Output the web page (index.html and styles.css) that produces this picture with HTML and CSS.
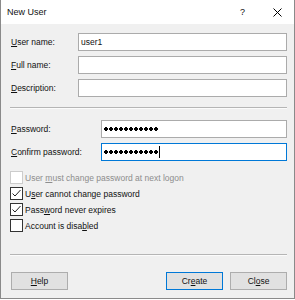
FILE: index.html
```html
<!DOCTYPE html>
<html>
<head>
<meta charset="utf-8">
<link rel="stylesheet" href="styles.css">
</head>
<body>
<div class="window">
  <div class="titlebar">
    <span class="title">New User</span>
    <span class="tb-help">?</span>
    <span class="tb-close">
      <svg width="9" height="9" viewBox="0 0 9 9"><path d="M0.5 0.5L8.5 8.5M8.5 0.5L0.5 8.5" stroke="#000" stroke-width="1" fill="none"/></svg>
    </span>
  </div>
  <div class="content">
    <div class="rows rows-top">
      <div class="row"><label class="lbl"><u>U</u>ser name:</label><div class="field">user1</div></div>
      <div class="row"><label class="lbl"><u>F</u>ull name:</label><div class="field"></div></div>
      <div class="row"><label class="lbl"><u>D</u>escription:</label><div class="field"></div></div>
    </div>
    <div class="sep sep1"></div>
    <div class="rows rows-pw">
      <div class="row"><label class="lbl"><u>P</u>assword:</label><div class="field pw"><span class="dots" aria-label="11 characters"></span></div></div>
      <div class="row"><label class="lbl"><u>C</u>onfirm password:</label><div class="field pw focus"><span class="dots" aria-label="11 characters"></span><span class="caret"></span></div></div>
    </div>
    <div class="checks">
      <div class="chk disabled"><span class="box"></span><span>User <u>m</u>ust change password at next logon</span></div>
      <div class="chk"><span class="box"><svg width="11" height="11" viewBox="0 0 11 11"><path d="M1.5 5.5L4 8L9.5 2" stroke="#222" stroke-width="1" fill="none"/></svg></span><span>U<u>s</u>er cannot change password</span></div>
      <div class="chk"><span class="box"><svg width="11" height="11" viewBox="0 0 11 11"><path d="M1.5 5.5L4 8L9.5 2" stroke="#222" stroke-width="1" fill="none"/></svg></span><span>Pass<u>w</u>ord never expires</span></div>
      <div class="chk"><span class="box"></span><span>Account is disa<u>b</u>led</span></div>
    </div>
    <div class="spacer"></div>
    <div class="sep sep2"></div>
    <div class="buttons">
      <div class="btn"><u>H</u>elp</div>
      <div class="grow"></div>
      <div class="btn default">Cr<u>e</u>ate</div>
      <div class="btn">Cl<u>o</u>se</div>
    </div>
  </div>
</div>
</body>
</html>
```
FILE: styles.css
```css
html, body {
  margin: 0;
  padding: 0;
  background: #ffffff;
}
body {
  font-family: "Liberation Sans", Arial, sans-serif;
  font-size: 8.5px;
  color: #111;
}
.window {
  width: 295px;
  height: 299px;
  box-sizing: border-box;
  border: 1px solid #8a8a8a;
  border-top: none;
  background: #f0f0f0;
  display: flex;
  flex-direction: column;
}
.titlebar {
  height: 24px;
  background: #ffffff;
  display: flex;
  align-items: center;
  position: relative;
}
.title {
  margin-left: 6px;
  font-size: 9px;
}
.tb-help {
  position: absolute;
  left: 239px;
  top: 7px;
  font-size: 9px;
}
.tb-close {
  position: absolute;
  left: 272px;
  top: 8px;
  width: 9px;
  height: 9px;
}
.tb-close svg { display: block; }
.content {
  flex: 1;
  display: flex;
  flex-direction: column;
  padding: 9px 7px 8px 8px;
}
.rows {
  display: flex;
  flex-direction: column;
  gap: 5px;
}
.row {
  display: flex;
  align-items: center;
  height: 18px;
}
.lbl {
  padding-left: 2px;
}
.rows-top .lbl { width: 67px; }
.rows-pw .lbl { width: 90px; }
.field {
  flex: 1;
  height: 18px;
  box-sizing: border-box;
  border: 1px solid #ababab;
  background: #fff;
  display: flex;
  align-items: center;
  padding-left: 2px;
}
.field.focus {
  border-color: #0078d7;
}
.dots {
  display: inline-block;
  width: 55px;
  height: 4px;
  background-image: radial-gradient(circle at 2px 2px, #000 1.6px, transparent 2.1px);
  background-size: 5px 4px;
  background-repeat: repeat-x;
}
.caret {
  display: inline-block;
  width: 1px;
  height: 12px;
  background: #000;
  margin-left: 0px;
}
.sep {
  height: 0;
  border-top: 1px solid #b5b5b5;
  border-bottom: 1px solid #fbfbfb;
}
.sep1 {
  margin: 10px 0 11px 1px;
}
.checks {
  margin-top: 10px;
  display: flex;
  flex-direction: column;
  gap: 3px;
}
.chk {
  display: flex;
  align-items: center;
  height: 13px;
  gap: 2px;
}
.box {
  width: 13px;
  height: 13px;
  box-sizing: border-box;
  border: 1px solid #333;
  background: #fff;
  margin-left: 1px;
  display: flex;
  align-items: center;
  justify-content: center;
}
.box svg { display: block; }
.chk.disabled { color: #8d8d8d; }
.chk.disabled .box { border-color: #cccccc; }
.spacer { flex: 1; }
.sep2 {
  margin: 0 0 16px 1px;
}
.buttons {
  display: flex;
  gap: 7px;
  padding-left: 2px;
}
.grow { flex: 1; }
.btn {
  width: 57px;
  height: 18px;
  box-sizing: border-box;
  border: 1px solid #adadad;
  background: #e1e1e1;
  display: flex;
  align-items: center;
  justify-content: center;
}
.btn.default {
  border-color: #0078d7;
}
```
